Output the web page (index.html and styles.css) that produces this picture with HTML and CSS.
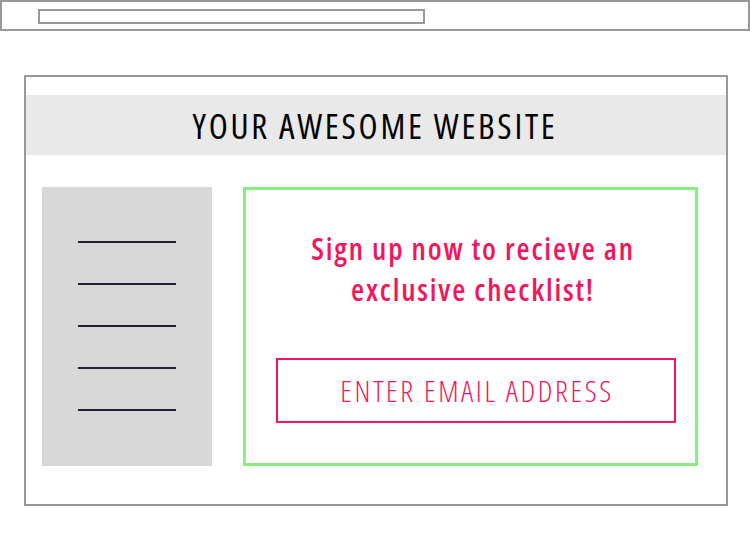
FILE: index.html
```html
<!DOCTYPE html>
<html>
<head>
<meta charset="utf-8">
<link rel="stylesheet" href="styles.css">
</head>
<body>
<div class="browser-bar"><div class="url-field"></div></div>
<div class="frame">
  <div class="site-header">YOUR AWESOME WEBSITE</div>
  <div class="content">
    <div class="sidebar">
      <div class="nav-line"></div>
      <div class="nav-line"></div>
      <div class="nav-line"></div>
      <div class="nav-line"></div>
      <div class="nav-line"></div>
    </div>
    <div class="signup">
      <div class="signup-title">Sign up now to recieve an<br>exclusive checklist!</div>
      <div class="email-field">ENTER EMAIL ADDRESS</div>
    </div>
  </div>
</div>
</body>
</html>
```
FILE: styles.css
```css
* { box-sizing: border-box; }
html, body { margin: 0; padding: 0; background: #fff; }
body {
  width: 750px;
  height: 550px;
  overflow: hidden;
  font-family: "Open Sans", "DejaVu Sans", sans-serif;
  font-stretch: 75%;
}
.browser-bar {
  height: 31px;
  border: 2px solid #999;
  padding: 7px 0 0 36px;
}
.url-field {
  width: 387px;
  height: 15px;
  border: 2px solid #999;
}
.frame {
  margin: 44px 0 0 24px;
  width: 704px;
  height: 431px;
  border: 2px solid #999;
  padding-top: 18px;
}
.site-header {
  height: 60px;
  background: #e9e9e9;
  display: flex;
  align-items: center;
  justify-content: center;
  font-size: 35px;
  color: #000;
  letter-spacing: 2.7px;
  padding-right: 2px;
}
.content {
  display: flex;
  padding: 32px 0 0 16px;
  gap: 31px;
}
.sidebar {
  width: 170px;
  height: 279px;
  background: #d8d8d8;
  padding: 54px 0 0 36px;
  display: flex;
  flex-direction: column;
  gap: 40px;
}
.nav-line {
  width: 98px;
  height: 2px;
  background: #22222e;
}
.signup {
  width: 455px;
  height: 279px;
  border: 3px solid #86ef7e;
  padding: 38px 0 0 30px;
}
.signup-title {
  color: #f5155a;
  font-size: 30px;
  font-weight: 600;
  line-height: 41px;
  letter-spacing: 1.8px;
  text-align: center;
  padding-right: 25px;
}
.email-field {
  margin-top: 48px;
  width: 400px;
  height: 65px;
  border: 2px solid #f5155a;
  color: #f5155a;
  font-size: 30px;
  font-weight: 300;
  letter-spacing: 2.6px;
  display: flex;
  align-items: center;
  justify-content: center;
  padding-left: 2px;
}
```
